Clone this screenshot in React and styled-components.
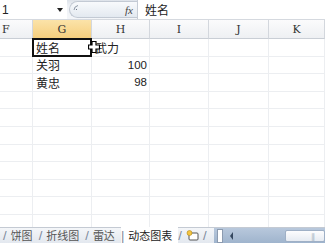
import React from "react";
import styled, { createGlobalStyle } from "styled-components";

const COLS = [
  { key: "F", width: 33 },
  { key: "G", width: 59 },
  { key: "H", width: 58 },
  { key: "I", width: 59 },
  { key: "J", width: 60 },
  { key: "K", width: 56 },
];

const ROWS = [
  { G: "姓名", H: "武力" },
  { G: "关羽", H: "100" },
  { G: "黄忠", H: "98" },
  {}, {}, {}, {}, {}, {}, {}, {},
];

const TABS = [
  { name: "饼图" },
  { name: "折线图" },
  { name: "雷达" },
  { name: "动态图表", active: true },
];

const GlobalStyle = createGlobalStyle`
  html, body { margin: 0; padding: 0; background: #fff; }
  body { font-family: "Noto Sans CJK SC", "Liberation Sans", sans-serif; }
`;

const Window = styled.div`
  width: 325px;
  height: 243px;
  display: flex;
  flex-direction: column;
  overflow: hidden;
  background: #fff;
`;

const FormulaBar = styled.div`
  height: 20px;
  flex: none;
  display: flex;
  align-items: stretch;
  background: linear-gradient(#dde2e9, #eef1f5 30%, #f4f6f9);
  border-bottom: 1px solid #d5d9df;
  box-sizing: border-box;
`;

const NameBox = styled.div`
  width: 67px;
  display: flex;
  align-items: center;
  justify-content: space-between;
  padding: 0 4px 0 2px;
  box-sizing: border-box;
  background: #fff;
  font-family: "Liberation Sans", sans-serif;
  font-size: 12px;
  color: #222;
`;

const Caret = styled.span`
  width: 0;
  height: 0;
  border-left: 3px solid transparent;
  border-right: 3px solid transparent;
  border-top: 4px solid #222;
`;

const Capsule = styled.div`
  width: 68px;
  margin: 1px 0 1px 2px;
  border-radius: 9px 0 0 9px;
  border: 1px solid #c3cad4;
  border-right: none;
  background: linear-gradient(#f8fafc, #e3e9f0);
  display: flex;
  align-items: center;
  justify-content: space-between;
  padding: 0 4px 0 2px;
  box-sizing: border-box;
`;

const Fx = styled.span`
  font-family: "Liberation Serif", serif;
  font-style: italic;
  font-size: 11px;
  color: #444;
`;

const FormulaInput = styled.div`
  flex: 1;
  background: #fff;
  border-left: 1px solid #c6ccd5;
  display: flex;
  align-items: center;
  padding-left: 7px;
  font-size: 12px;
  color: #222;
`;

const Sheet = styled.div`
  flex: 1;
  position: relative;
  overflow: hidden;
`;

const Grid = styled.div`
  display: grid;
  grid-template-columns: ${COLS.map((c) => c.width + "px").join(" ")};
  grid-auto-rows: 17.6px;
  grid-template-rows: 19px;
`;

const HeaderCell = styled.div`
  display: flex;
  align-items: center;
  justify-content: ${(p) => (p.$cut ? "flex-start" : "center")};
  padding-left: ${(p) => (p.$cut ? "2px" : "0")};
  font-family: "DejaVu Serif", "Liberation Serif", serif;
  font-size: 11px;
  color: #333;
  box-sizing: border-box;
  border-right: 1px solid #d3d7dd;
  border-bottom: 1px solid #c9ced5;
  background: ${(p) =>
    p.$active
      ? "linear-gradient(#fbe3a9, #f6cf7e)"
      : "linear-gradient(#fbfbfc, #eef0f3)"};
`;

const Cell = styled.div`
  position: relative;
  box-sizing: border-box;
  border-right: 1px solid #eceef1;
  border-bottom: 1px solid #eceef1;
  display: flex;
  align-items: center;
  justify-content: ${(p) => (p.$num ? "flex-end" : "flex-start")};
  padding: 0 2px 0 3px;
  font-family: ${(p) =>
    p.$num ? '"Liberation Sans", sans-serif' : '"Noto Sans CJK SC", sans-serif'};
  font-size: ${(p) => (p.$num ? "11.5px" : "12px")};
  color: #222;
  white-space: nowrap;
`;

const Selection = styled.div`
  position: absolute;
  inset: -1px -1px -1px -1px;
  border: 2px solid #111;
  pointer-events: none;
`;

const Cursor = styled.svg`
  position: absolute;
  right: -9px;
  top: 2px;
  z-index: 2;
`;

const TabBar = styled.div`
  height: 16px;
  flex: none;
  display: flex;
  align-items: stretch;
  background: linear-gradient(#f4f6f9, #e3e8ef);
  border-top: 1px solid #c4cad3;
  box-sizing: border-box;
  font-size: 11px;
`;

const Tabs = styled.div`
  display: flex;
  align-items: stretch;
  padding-left: 3px;
`;

const Tab = styled.div`
  display: flex;
  align-items: center;
  gap: 4px;
  padding: 0 6px 0 0;
  color: ${(p) => (p.$active ? "#222" : "#555")};
  background: ${(p) => (p.$active ? "#fff" : "transparent")};
  margin-top: -1px;
  line-height: 1;
`;

const Slant = styled.span`
  color: #7d8a9c;
  font-family: "Liberation Sans", sans-serif;
  font-size: 13px;
  font-weight: 300;
`;

const NewSheet = styled.div`
  display: flex;
  align-items: center;
  padding: 0 3px 0 0;
  gap: 4px;
`;

const Scroll = styled.div`
  flex: 1;
  display: flex;
  align-items: center;
  margin-left: 4px;
  background: linear-gradient(#b8c8dc, #9fb4cd);
`;

const Split = styled.div`
  width: 4px;
  height: 12px;
  margin: 0 7px 0 3px;
  background: #fff;
  border: 1px solid #8c9bb0;
`;

const Arrow = styled.span`
  width: 0;
  height: 0;
  border-top: 4px solid transparent;
  border-bottom: 4px solid transparent;
  border-right: 3px solid #34475f;
`;

const Thumb = styled.div`
  margin-left: auto;
  width: 40px;
  height: 12px;
  background: linear-gradient(#fdfdfe, #e6ebf2);
  border: 1px solid #9fb0c6;
  border-radius: 2px;
  display: flex;
  align-items: center;
  justify-content: flex-end;
  padding-right: 10px;
  box-sizing: border-box;
  color: #9aa6b5;
  font-size: 7px;
  letter-spacing: -1px;
`;

function CrossCursor() {
  return (
    <Cursor width="12" height="12" viewBox="0 0 12 12">
      <path
        d="M4 0.5h4v3.5h3.5v4h-3.5v3.5h-4v-3.5h-3.5v-4h3.5z"
        fill="#fff"
        stroke="#000"
        strokeWidth="1.2"
      />
    </Cursor>
  );
}

function InsertIcon() {
  return (
    <svg width="13" height="11" viewBox="0 0 13 11">
      <rect x="3" y="3" width="9" height="7" rx="1" fill="#fff" stroke="#555" />
      <circle cx="3.5" cy="3" r="2.5" fill="#f5c542" stroke="#b08a1a" strokeWidth="0.6" />
    </svg>
  );
}

export default function App() {
  return (
    <Window>
      <GlobalStyle />
      <FormulaBar>
        <NameBox>
          1<Caret />
        </NameBox>
        <Capsule>
          <svg width="8" height="12" viewBox="0 0 8 12">
            <path d="M6 1.5A5 5 0 0 0 2 6" fill="none" stroke="#8e98a6" strokeWidth="1" />
            <path d="M4 5l1 1" stroke="#6d7784" strokeWidth="1" />
          </svg>
          <Fx>fx</Fx>
        </Capsule>
        <FormulaInput>姓名</FormulaInput>
      </FormulaBar>

      <Sheet>
        <Grid>
          {COLS.map((c, i) => (
            <HeaderCell key={c.key} $active={c.key === "G"} $cut={i === 0}>
              {c.key}
            </HeaderCell>
          ))}
          {ROWS.map((row, r) =>
            COLS.map((c) => {
              const v = row[c.key];
              const num = v !== undefined && /^\d+$/.test(v);
              const selected = r === 0 && c.key === "G";
              return (
                <Cell key={c.key + r} $num={num}>
                  {v}
                  {selected && <Selection />}
                  {selected && <CrossCursor />}
                </Cell>
              );
            })
          )}
        </Grid>
      </Sheet>

      <TabBar>
        <Tabs>
          {TABS.map((t) => (
            <Tab key={t.name} $active={t.active}>
              <Slant>{t.active ? "|" : "/"}</Slant>
              {t.name}
            </Tab>
          ))}
          <NewSheet>
            <Slant>/</Slant>
            <InsertIcon />
            <Slant>/</Slant>
          </NewSheet>
        </Tabs>
        <Scroll>
          <Split />
          <Arrow />
          <Thumb>|||</Thumb>
        </Scroll>
      </TabBar>
    </Window>
  );
}
